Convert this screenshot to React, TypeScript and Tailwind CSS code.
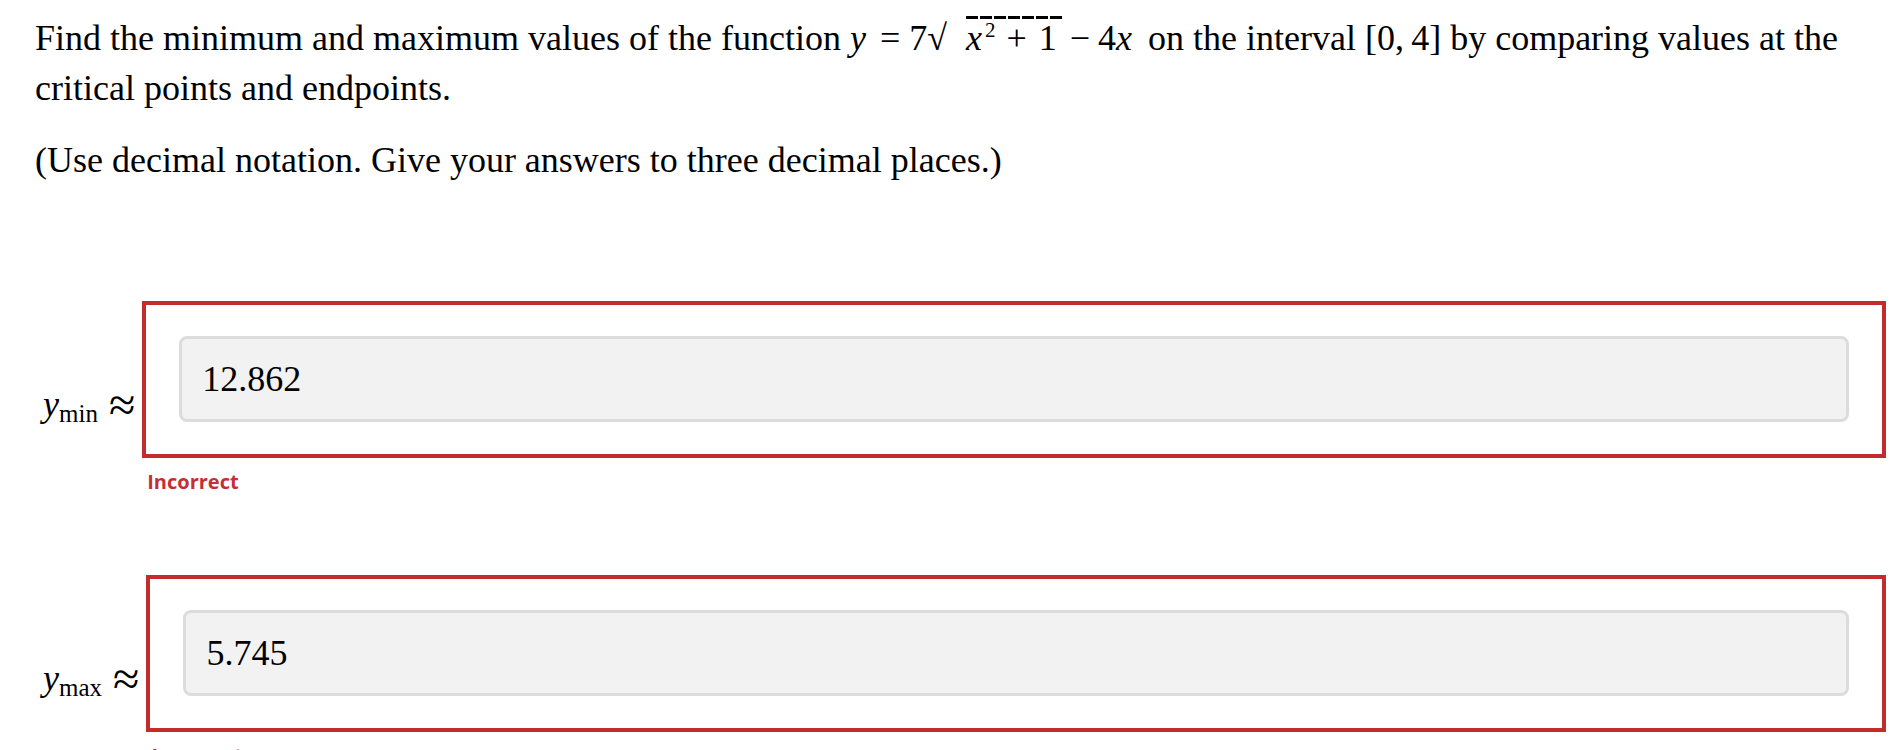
import React from 'react';

const serif = "font-['Liberation_Serif','Times_New_Roman',serif]";

function Formula() {
  return (
    <span className="whitespace-nowrap">
      <i>y</i>
      <span className="ml-[14px]">=</span>
      <span className="ml-[9px]">7</span>
      <span>√</span>
      <span className="relative ml-[19px]">
        <i>x</i>
        <span className="relative top-[-13px] ml-[3px] text-[21px] leading-none">2</span>
        <span className="ml-[11px]">+</span>
        <span className="ml-[12px]">1</span>
        <span className="absolute left-0 right-[-6px] top-[-2px] h-[3px] bg-[repeating-linear-gradient(90deg,#000_0_12px,transparent_12px_14px)]" />
      </span>
      <span className="ml-[13px]">−</span>
      <span className="ml-[8px]">4</span>
      <i>x</i>
    </span>
  );
}

interface AnswerRowProps {
  sub: string;
  value: string;
}

function AnswerRow({ sub, value }: AnswerRowProps) {
  return (
    <div className="flex items-start pl-[8px]">
      <div className={`${serif} mt-[85px] shrink-0 text-[36px] leading-none text-black whitespace-nowrap`}>
        <i>y</i>
        <span className="relative top-[6px] text-[25px]">{sub}</span>
        <span className="relative top-[5px] ml-[11px] text-[48px] leading-[0]">≈</span>
      </div>
      <div className="ml-[7px] flex-1">
        <div className="border-[4px] border-[#c12c2c] px-[33px] pt-[31px] pb-[32px]">
          <input
            readOnly
            value={value}
            className={`${serif} block h-[86px] w-full rounded-[8px] border-[3px] border-[#dcdcdc] bg-[#f2f2f2] pl-[20px] text-[36px] text-black outline-none`}
          />
        </div>
        <div className="mt-[9px] pl-[5px] font-['Open_Sans',sans-serif] text-[20px] leading-[30px] font-bold text-[#c42f33]">
          Incorrect
        </div>
      </div>
    </div>
  );
}

export default function App() {
  return (
    <div className="min-h-screen bg-white pl-[35px] pr-[16px] pt-[13px] text-black">
      <p className={`${serif} text-[36px] leading-[50px]`}>
        Find the minimum and maximum values of the function <Formula />
        <span className="ml-[7px]"> on the interval [0,&#8201;4] by comparing values at the critical points and endpoints.</span>
      </p>
      <p className={`${serif} mt-[22px] text-[36px] leading-[50px]`}>
        (Use decimal notation. Give your answers to three decimal places.)
      </p>
      <div className="mt-[116px] flex flex-col gap-[78px]">
        <AnswerRow sub="min" value="12.862" />
        <AnswerRow sub="max" value="5.745" />
      </div>
    </div>
  );
}
